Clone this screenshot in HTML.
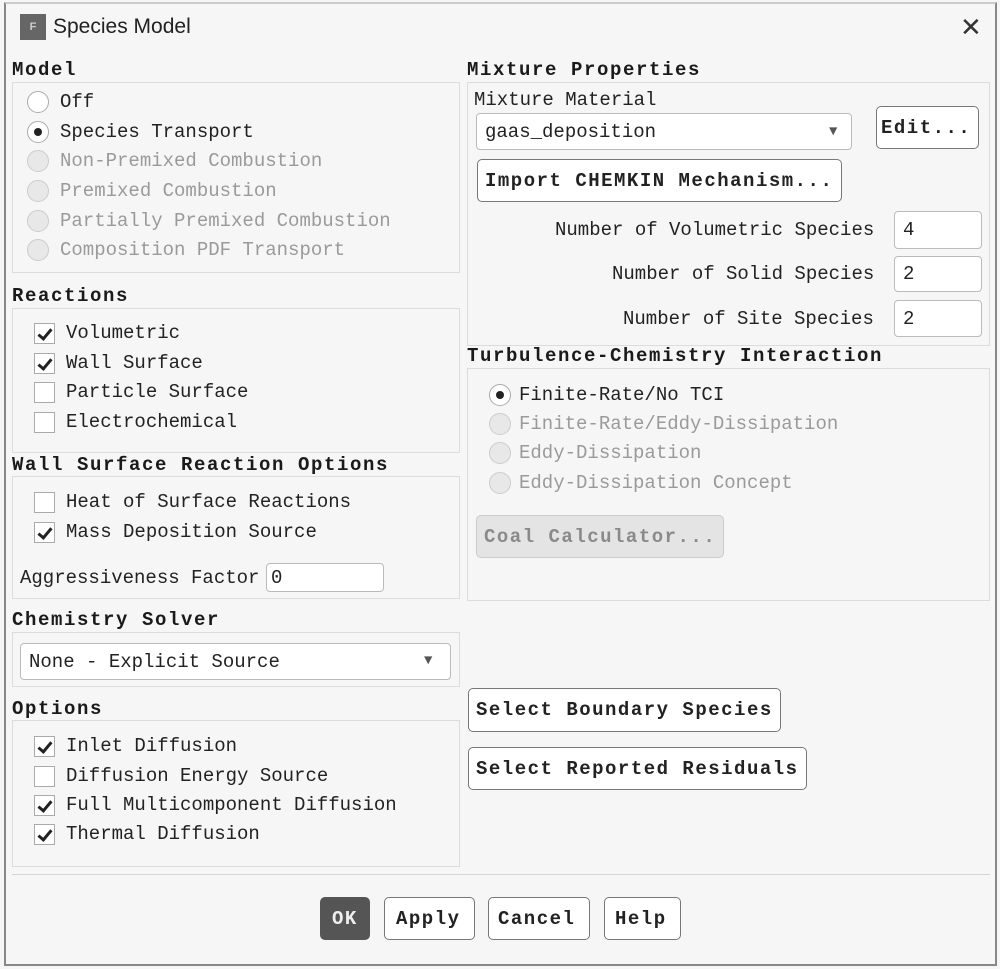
<!DOCTYPE html>
<html><head><meta charset="utf-8"><style>
*{box-sizing:border-box;margin:0;padding:0}
body{width:1000px;height:969px;background:#f6f6f6;position:relative;overflow:hidden;font-family:"Liberation Mono",monospace;font-size:19px;color:#222}
.a{position:absolute;white-space:nowrap;line-height:22px}
.h{font-weight:bold;letter-spacing:1.6px;color:#1a1a1a}
.p{position:absolute;border:1px solid #dcdcdc}
.r{position:absolute;width:22px;height:22px;border-radius:50%;border:1px solid #aaa;background:#fff}
.r.d{background:#e8e8e8;border-color:#ccc}
.r.on::after{content:"";position:absolute;left:6px;top:6px;width:8px;height:8px;border-radius:50%;background:#222}
.c{position:absolute;width:21px;height:21px;border:1px solid #aaa;background:#fff}
.c.on::after{content:"";position:absolute;left:6px;top:2px;width:5px;height:11px;border:solid #222;border-width:0 3px 3px 0;transform:rotate(40deg)}
.g{color:#9a9a9a}
.b{position:absolute;border:1.5px solid #777;border-radius:5px;background:#fff;font-weight:bold;letter-spacing:1.5px;display:flex;align-items:center;padding-left:7px;white-space:nowrap}
.in{position:absolute;border:1px solid #bbb;border-radius:4px;background:#fff;padding-left:8px;display:flex;align-items:center}
</style></head><body>
<div style="position:absolute;left:4px;top:2px;width:993px;height:964px;border:2px solid #888;border-top-color:#ccc"></div>
<div style="position:absolute;left:20px;top:14px;width:26px;height:26px;background:#666;color:#ccc;font:bold 11px 'Liberation Sans';text-align:center;line-height:26px">F</div>
<div class="a" style="left:53px;top:15px;font:21px 'Liberation Sans',sans-serif;color:#222">Species Model</div>
<div class="a" style="left:960px;top:12px;font:26px 'Liberation Sans',sans-serif;color:#333">✕</div>

<div class="a h" style="left:12px;top:59px">Model</div>
<div class="p" style="left:12px;top:82px;width:448px;height:191px"></div>
<div class="r" style="left:27px;top:91px"></div><div class="a" style="left:60px;top:91px">Off</div>
<div class="r on" style="left:27px;top:121px"></div><div class="a" style="left:60px;top:121px">Species Transport</div>
<div class="r d" style="left:27px;top:150px"></div><div class="a g" style="left:60px;top:150px">Non-Premixed Combustion</div>
<div class="r d" style="left:27px;top:180px"></div><div class="a g" style="left:60px;top:180px">Premixed Combustion</div>
<div class="r d" style="left:27px;top:210px"></div><div class="a g" style="left:60px;top:210px">Partially Premixed Combustion</div>
<div class="r d" style="left:27px;top:239px"></div><div class="a g" style="left:60px;top:239px">Composition PDF Transport</div>

<div class="a h" style="left:12px;top:285px">Reactions</div>
<div class="p" style="left:12px;top:308px;width:448px;height:145px"></div>
<div class="c on" style="left:34px;top:323px"></div><div class="a" style="left:66px;top:322px">Volumetric</div>
<div class="c on" style="left:34px;top:353px"></div><div class="a" style="left:66px;top:352px">Wall Surface</div>
<div class="c" style="left:34px;top:382px"></div><div class="a" style="left:66px;top:381px">Particle Surface</div>
<div class="c" style="left:34px;top:412px"></div><div class="a" style="left:66px;top:411px">Electrochemical</div>

<div class="a h" style="left:12px;top:454px">Wall Surface Reaction Options</div>
<div class="p" style="left:12px;top:476px;width:448px;height:123px"></div>
<div class="c" style="left:34px;top:492px"></div><div class="a" style="left:66px;top:491px">Heat of Surface Reactions</div>
<div class="c on" style="left:34px;top:522px"></div><div class="a" style="left:66px;top:521px">Mass Deposition Source</div>
<div class="a" style="left:20px;top:567px">Aggressiveness Factor</div>
<div class="in" style="left:266px;top:563px;width:118px;height:29px;padding-left:4px">0</div>

<div class="a h" style="left:12px;top:609px">Chemistry Solver</div>
<div class="p" style="left:12px;top:632px;width:448px;height:55px"></div>
<div class="in" style="left:20px;top:643px;width:431px;height:37px">None - Explicit Source</div>
<div class="a" style="left:424px;top:650px;font-size:14px;color:#555">▼</div>

<div class="a h" style="left:12px;top:698px">Options</div>
<div class="p" style="left:12px;top:720px;width:448px;height:147px"></div>
<div class="c on" style="left:34px;top:736px"></div><div class="a" style="left:66px;top:735px">Inlet Diffusion</div>
<div class="c" style="left:34px;top:766px"></div><div class="a" style="left:66px;top:765px">Diffusion Energy Source</div>
<div class="c on" style="left:34px;top:795px"></div><div class="a" style="left:66px;top:794px">Full Multicomponent Diffusion</div>
<div class="c on" style="left:34px;top:824px"></div><div class="a" style="left:66px;top:823px">Thermal Diffusion</div>

<div class="a h" style="left:467px;top:59px">Mixture Properties</div>
<div class="p" style="left:467px;top:82px;width:523px;height:264px"></div>
<div class="a" style="left:474px;top:89px">Mixture Material</div>
<div class="in" style="left:476px;top:113px;width:376px;height:37px">gaas_deposition</div>
<div class="a" style="left:829px;top:121px;font-size:14px;color:#555">▼</div>
<div class="b" style="left:876px;top:106px;width:103px;height:43px;padding-left:4px">Edit...</div>
<div class="b" style="left:477px;top:159px;width:365px;height:43px">Import CHEMKIN Mechanism...</div>
<div class="a" style="left:555px;top:219px">Number of Volumetric Species</div>
<div class="a" style="left:612px;top:263px">Number of Solid Species</div>
<div class="a" style="left:623px;top:308px">Number of Site Species</div>
<div class="in" style="left:894px;top:211px;width:88px;height:38px">4</div>
<div class="in" style="left:894px;top:256px;width:88px;height:36px">2</div>
<div class="in" style="left:894px;top:300px;width:88px;height:37px">2</div>

<div class="a h" style="left:467px;top:345px">Turbulence-Chemistry Interaction</div>
<div class="p" style="left:467px;top:368px;width:523px;height:233px"></div>
<div class="r on" style="left:489px;top:384px"></div><div class="a" style="left:519px;top:384px">Finite-Rate/No TCI</div>
<div class="r d" style="left:489px;top:413px"></div><div class="a g" style="left:519px;top:413px">Finite-Rate/Eddy-Dissipation</div>
<div class="r d" style="left:489px;top:442px"></div><div class="a g" style="left:519px;top:442px">Eddy-Dissipation</div>
<div class="r d" style="left:489px;top:472px"></div><div class="a g" style="left:519px;top:472px">Eddy-Dissipation Concept</div>
<div class="b" style="left:476px;top:515px;width:248px;height:43px;background:#e4e4e4;border-color:#ccc;color:#8a8a8a">Coal Calculator...</div>

<div class="b" style="left:468px;top:688px;width:313px;height:44px">Select Boundary Species</div>
<div class="b" style="left:468px;top:747px;width:339px;height:43px">Select Reported Residuals</div>

<div style="position:absolute;left:12px;top:874px;width:978px;height:1px;background:#d4d4d4"></div>
<div class="b" style="left:320px;top:897px;width:50px;height:43px;background:#555;border-color:#555;color:#eee;padding-left:11px">OK</div>
<div class="b" style="left:384px;top:897px;width:91px;height:43px;padding-left:11px">Apply</div>
<div class="b" style="left:488px;top:897px;width:102px;height:43px;padding-left:9px">Cancel</div>
<div class="b" style="left:604px;top:897px;width:77px;height:43px;padding-left:10px">Help</div>
</body></html>
